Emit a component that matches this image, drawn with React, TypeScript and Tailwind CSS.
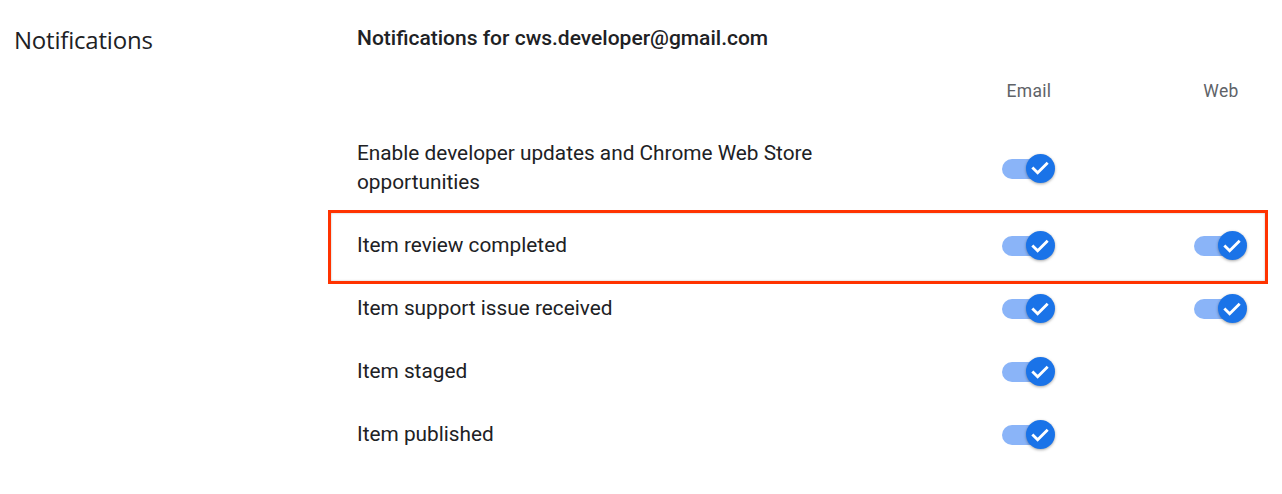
import React from "react";

const rows = [
  { label: "Enable developer updates and Chrome Web Store opportunities", email: true, web: false },
  { label: "Item review completed", email: true, web: true, highlight: true },
  { label: "Item support issue received", email: true, web: true },
  { label: "Item staged", email: true, web: false },
  { label: "Item published", email: true, web: false },
];

const Toggle = () => (
  <div className="relative w-[53px] h-[29px]">
    <div className="absolute left-0 top-[5px] w-[44px] h-[20px] rounded-full bg-[#8ab4f8]" />
    <div className="absolute right-0 top-0 w-[29px] h-[29px] rounded-full bg-[#1a73e8] shadow-[0_1px_3px_rgba(0,0,0,0.35)] grid place-content-center">
      <svg width="20" height="20" viewBox="0 0 24 24" fill="none">
        <path d="M4 12.5l5.2 5.2L20 7" stroke="#fff" strokeWidth="3.4" strokeLinecap="square" />
      </svg>
    </div>
  </div>
);

export default function App() {
  return (
    <div className="flex w-full h-[494px] bg-white text-[#202124] font-['Roboto',sans-serif]">
      <aside className="w-[357px] flex-none pl-[14px] pt-[25px]">
        <h1 className="text-[24px] leading-[30px] font-['Open_Sans',sans-serif] tracking-[-0.2px]">Notifications</h1>
      </aside>
      <main className="flex-1 pt-[26px] pr-[14px]">
        <h2 className="text-[21px] leading-[24px] font-medium">Notifications for cws.developer@gmail.com</h2>
        <div className="grid grid-cols-[1fr_96px_96px] gap-x-[96px] mt-[29px] text-[17.5px] leading-[24px] text-[#5f6368] tracking-[0.3px]">
          <div />
          <div className="text-center pl-[2px]">Email</div>
          <div className="text-center pl-[2px]">Web</div>
        </div>
        <div className="mt-[19px]">
          {rows.map((row) => (
            <div key={row.label} className="relative grid grid-cols-[1fr_96px_96px] gap-x-[96px] items-center py-[17px] text-[20.8px] leading-[29px]">
              <div>{row.label}</div>
              <div className="flex justify-center">{row.email && <Toggle />}</div>
              <div className="flex justify-center">{row.web && <Toggle />}</div>
              {row.highlight && (
                <div className="absolute left-[-29px] right-0 top-[-4px] bottom-[-7px] border-[3px] border-[#ff3300] shadow-[inset_0_0_2px_rgba(0,0,0,0.3)] pointer-events-none" />
              )}
            </div>
          ))}
        </div>
      </main>
    </div>
  );
}
